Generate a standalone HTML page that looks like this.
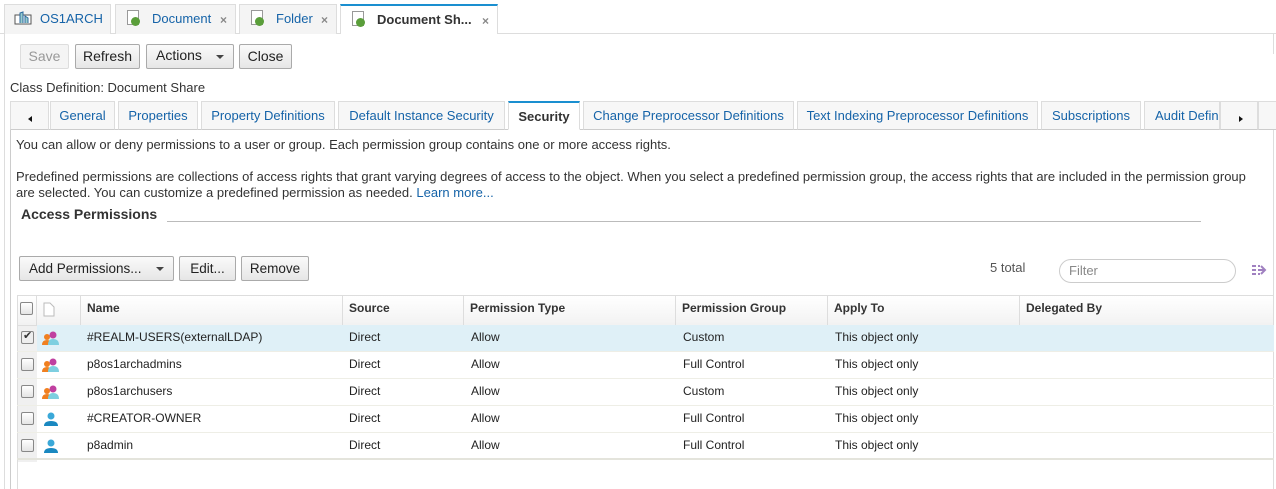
<!DOCTYPE html>
<html><head><style>
*{box-sizing:border-box;margin:0;padding:0}
body{width:1276px;height:489px;background:#fff;font-family:"Liberation Sans",Arial,sans-serif;font-size:12px;color:#222;position:relative;overflow:hidden}
.a{position:absolute}
.tt{position:absolute;top:4px;height:30px;border:1px solid #ddd;border-bottom:none;background:#f4f4f4;color:#1563a8;font-size:13px;line-height:28px;padding-left:36px}
.tt.act{background:#fff;border-top:2px solid #1a8fd0;color:#333;font-weight:bold;height:30px}
.tt .x{position:absolute;right:8px;top:1px;color:#888;font-size:12px;font-weight:bold}
.doc{position:absolute;left:11px;top:5px;width:12px;height:15px;border:1px solid #999;background:#fff}
.doc:after{content:"";position:absolute;left:3px;top:6px;width:9px;height:9px;border-radius:50%;background:#5a9e3a}
.btn{position:absolute;top:44px;height:25px;border:1px solid #aaa;border-radius:2px;background:linear-gradient(#fafafa,#e6e6e6);font-size:14px;line-height:23px;text-align:center;color:#222}
.st{position:absolute;top:101px;height:29px;border:1px solid #ddd;border-bottom:1px solid #ccc;background:#f7f7f7;color:#1563a8;font-size:13px;line-height:27px;text-align:center;white-space:nowrap;overflow:hidden}
.st.act{background:#fff;border-top:2px solid #1a8fd0;border-bottom:1px solid #fff;color:#333;font-weight:bold}
.txt{position:absolute;left:16px;font-size:13px;color:#333;white-space:nowrap}
.b2{position:absolute;top:256px;height:25px;border:1px solid #aaa;border-radius:2px;background:linear-gradient(#fafafa,#e6e6e6);font-size:14px;line-height:23px;text-align:center}
.row{position:absolute;left:17px;width:1257px;height:27px;border-bottom:1px solid #eeeee6;font-size:12px}
.row span{position:absolute;top:5px;color:#222}
.cb{position:absolute;left:4px;top:6px;width:13px;height:13px;border:1px solid #888;border-radius:2px;background:linear-gradient(#fff,#e4e4e4)}
.hd{position:absolute;top:296px;height:30px;border-right:1px solid #ddd;font-weight:bold;font-size:12px;line-height:24px;padding-left:6px;color:#333}
</style></head><body>
<div class="a" style="left:0;top:33px;width:1276px;height:1px;background:#ddd"></div>
<div class="tt" style="left:4px;width:107px;padding-left:35px">
 <svg class="a" style="left:9px;top:6px" width="18" height="14"><rect x="1" y="4" width="16" height="9" fill="#fff" stroke="#555"/><path d="M6 12V2L9 1V12M11 12V5L14 7V12" stroke="#2a6aa0" fill="#9cc"/></svg>OS1ARCH</div>
<div class="tt" style="left:115px;width:121px"><div class="doc"></div>Document<span class="x">×</span></div>
<div class="tt" style="left:239px;width:98px"><div class="doc"></div>Folder<span class="x">×</span></div>
<div class="tt act" style="left:340px;width:158px;top:4px"><div class="doc"></div>Document Sh...<span class="x" style="font-weight:bold">×</span></div>
<div class="a" style="left:4px;top:34px;width:1px;height:455px;background:#ddd"></div>
<div class="a" style="left:1273px;top:34px;width:1px;height:20px;background:#ddd"></div>
<div class="btn" style="left:20px;width:49px;color:#999;background:#f4f4f4;border-color:#ddd">Save</div>
<div class="btn" style="left:75px;width:65px">Refresh</div>
<div class="btn" style="left:146px;width:88px;text-align:left;padding-left:9px;line-height:20px">Actions<span class="a" style="left:69px;top:10px;border:4px solid transparent;border-top:4px solid #444"></span></div>
<div class="btn" style="left:239px;width:53px">Close</div>
<div class="a" style="left:10px;top:80px;font-size:13px;color:#333">Class Definition: Document Share</div>
<div class="a" style="left:10px;top:129px;width:1266px;height:1px;background:#ccc"></div>
<div class="st" style="left:10px;width:39px"><span class="a" style="left:17px;top:14px;border:3px solid transparent;border-right:4px solid #111;border-left:none"></span></div>
<div class="st" style="left:50px;width:65px">General</div>
<div class="st" style="left:118px;width:80px">Properties</div>
<div class="st" style="left:201px;width:134px">Property Definitions</div>
<div class="st" style="left:338px;width:167px">Default Instance Security</div>
<div class="st act" style="left:508px;width:72px">Security</div>
<div class="st" style="left:583px;width:211px">Change Preprocessor Definitions</div>
<div class="st" style="left:797px;width:241px">Text Indexing Preprocessor Definitions</div>
<div class="st" style="left:1041px;width:100px">Subscriptions</div>
<div class="st" style="left:1144px;width:76px;text-align:left;padding-left:10px">Audit Defin</div>
<div class="st" style="left:1220px;width:38px"><span class="a" style="left:18px;top:14px;border:3px solid transparent;border-left:4px solid #111;border-right:none"></span></div>
<div class="st" style="left:1258px;width:30px"></div>
<div class="a" style="left:10px;top:130px;width:1px;height:359px;background:#ccc"></div>
<div class="a" style="left:1273px;top:130px;width:1px;height:359px;background:#ddd"></div>
<div class="txt" style="top:137px">You can allow or deny permissions to a user or group. Each permission group contains one or more access rights.</div>
<div class="txt" style="top:169px">Predefined permissions are collections of access rights that grant varying degrees of access to the object. When you select a predefined permission group, the access rights that are included in the permission group</div>
<div class="txt" style="top:185px">are selected. You can customize a predefined permission as needed. <span style="color:#1563a8">Learn more...</span></div>
<div class="a" style="left:21px;top:206px;font-size:14px;font-weight:bold;color:#333">Access Permissions</div>
<div class="a" style="left:167px;top:221px;width:1034px;height:1px;background:#bbb"></div>
<div class="b2" style="left:19px;width:155px;text-align:left;padding-left:9px;font-size:13.5px">Add Permissions...<span class="a" style="left:136px;top:10px;border:4px solid transparent;border-top:4px solid #444"></span></div>
<div class="b2" style="left:179px;width:57px;font-size:13.5px">Edit...</div>
<div class="b2" style="left:241px;width:68px;font-size:13.5px">Remove</div>
<div class="a" style="left:990px;top:260px;font-size:13px;color:#555">5 total</div>
<div class="a" style="left:1059px;top:259px;width:177px;height:24px;border:1px solid #ccc;border-radius:12px;padding-left:9px;line-height:21px;color:#888;font-size:13px">Filter</div>
<svg class="a" style="left:1251px;top:263px" width="16" height="14"><path d="M1 3H5M1 7H5M1 11H5M7 3H9M7 11H9M7 7H14M10 3L14 7L10 11" stroke="#a080c0" stroke-width="2" fill="none"/></svg>
<div class="a" style="left:17px;top:295px;width:1257px;height:31px;border:1px solid #ddd;background:linear-gradient(#fff,#f2f2f2)"></div>
<div class="a" style="left:17px;top:295px;width:1px;height:194px;background:#ddd"></div>
<div class="hd" style="left:17px;width:20px"><div class="cb" style="left:3px;top:6px"></div></div>
<div class="hd" style="left:37px;width:44px"><svg class="a" style="left:6px;top:6px" width="12" height="15"><path d="M1 1H7L11 5V14H1Z" fill="#fff" stroke="#bbb"/></svg></div>
<div class="hd" style="left:81px;width:262px">Name</div>
<div class="hd" style="left:343px;width:121px">Source</div>
<div class="hd" style="left:464px;width:212px">Permission Type</div>
<div class="hd" style="left:676px;width:152px">Permission Group</div>
<div class="hd" style="left:828px;width:192px">Apply To</div>
<div class="hd" style="left:1020px;width:253px;border-right:none">Delegated By</div>

<div class="row" style="top:325px"><div class="a" style="left:20px;top:0;width:1237px;height:26px;background:#dff0f7"></div><div class="cb" style="background:#eee"><span style="position:absolute;left:1px;top:-3px;font-size:11px;color:#333">✔</span></div><svg class="a" style="left:25px;top:5px" width="18" height="15"><circle cx="5" cy="7" r="3" fill="#f08020"/><path d="M0 15Q0 10 5 10Q10 10 10 15Z" fill="#f08020"/><circle cx="11" cy="5" r="3.5" fill="#c040a0"/><path d="M6 15Q6 9 11 9Q17 9 17 15Z" fill="#7ecfe0"/></svg><span style="left:70px">#REALM-USERS(externalLDAP)</span><span style="left:332px">Direct</span><span style="left:454px">Allow</span><span style="left:666px">Custom</span><span style="left:818px">This object only</span></div>
<div class="row" style="top:352px"><div class="cb"></div><svg class="a" style="left:25px;top:5px" width="18" height="15"><circle cx="5" cy="7" r="3" fill="#f08020"/><path d="M0 15Q0 10 5 10Q10 10 10 15Z" fill="#f08020"/><circle cx="11" cy="5" r="3.5" fill="#c040a0"/><path d="M6 15Q6 9 11 9Q17 9 17 15Z" fill="#7ecfe0"/></svg><span style="left:70px">p8os1archadmins</span><span style="left:332px">Direct</span><span style="left:454px">Allow</span><span style="left:666px">Full Control</span><span style="left:818px">This object only</span></div>
<div class="row" style="top:379px"><div class="cb"></div><svg class="a" style="left:25px;top:5px" width="18" height="15"><circle cx="5" cy="7" r="3" fill="#f08020"/><path d="M0 15Q0 10 5 10Q10 10 10 15Z" fill="#f08020"/><circle cx="11" cy="5" r="3.5" fill="#c040a0"/><path d="M6 15Q6 9 11 9Q17 9 17 15Z" fill="#7ecfe0"/></svg><span style="left:70px">p8os1archusers</span><span style="left:332px">Direct</span><span style="left:454px">Allow</span><span style="left:666px">Custom</span><span style="left:818px">This object only</span></div>
<div class="row" style="top:406px"><div class="cb"></div><svg class="a" style="left:25px;top:5px" width="18" height="15"><circle cx="9" cy="5" r="3.5" fill="#3aa8d8"/><path d="M2 15Q2 10 9 10Q16 10 16 15Z" fill="#1a88c0"/></svg><span style="left:70px">#CREATOR-OWNER</span><span style="left:332px">Direct</span><span style="left:454px">Allow</span><span style="left:666px">Full Control</span><span style="left:818px">This object only</span></div>
<div class="row" style="top:433px;border-bottom:2px solid #e4e4dc"><div class="cb"></div><svg class="a" style="left:25px;top:5px" width="18" height="15"><circle cx="9" cy="5" r="3.5" fill="#3aa8d8"/><path d="M2 15Q2 10 9 10Q16 10 16 15Z" fill="#1a88c0"/></svg><span style="left:70px">p8admin</span><span style="left:332px">Direct</span><span style="left:454px">Allow</span><span style="left:666px">Full Control</span><span style="left:818px">This object only</span></div>
<div class="a" style="left:17px;top:325px;width:20px;height:137px;background:#f0f0f0;z-index:-1"></div>
</body></html>
